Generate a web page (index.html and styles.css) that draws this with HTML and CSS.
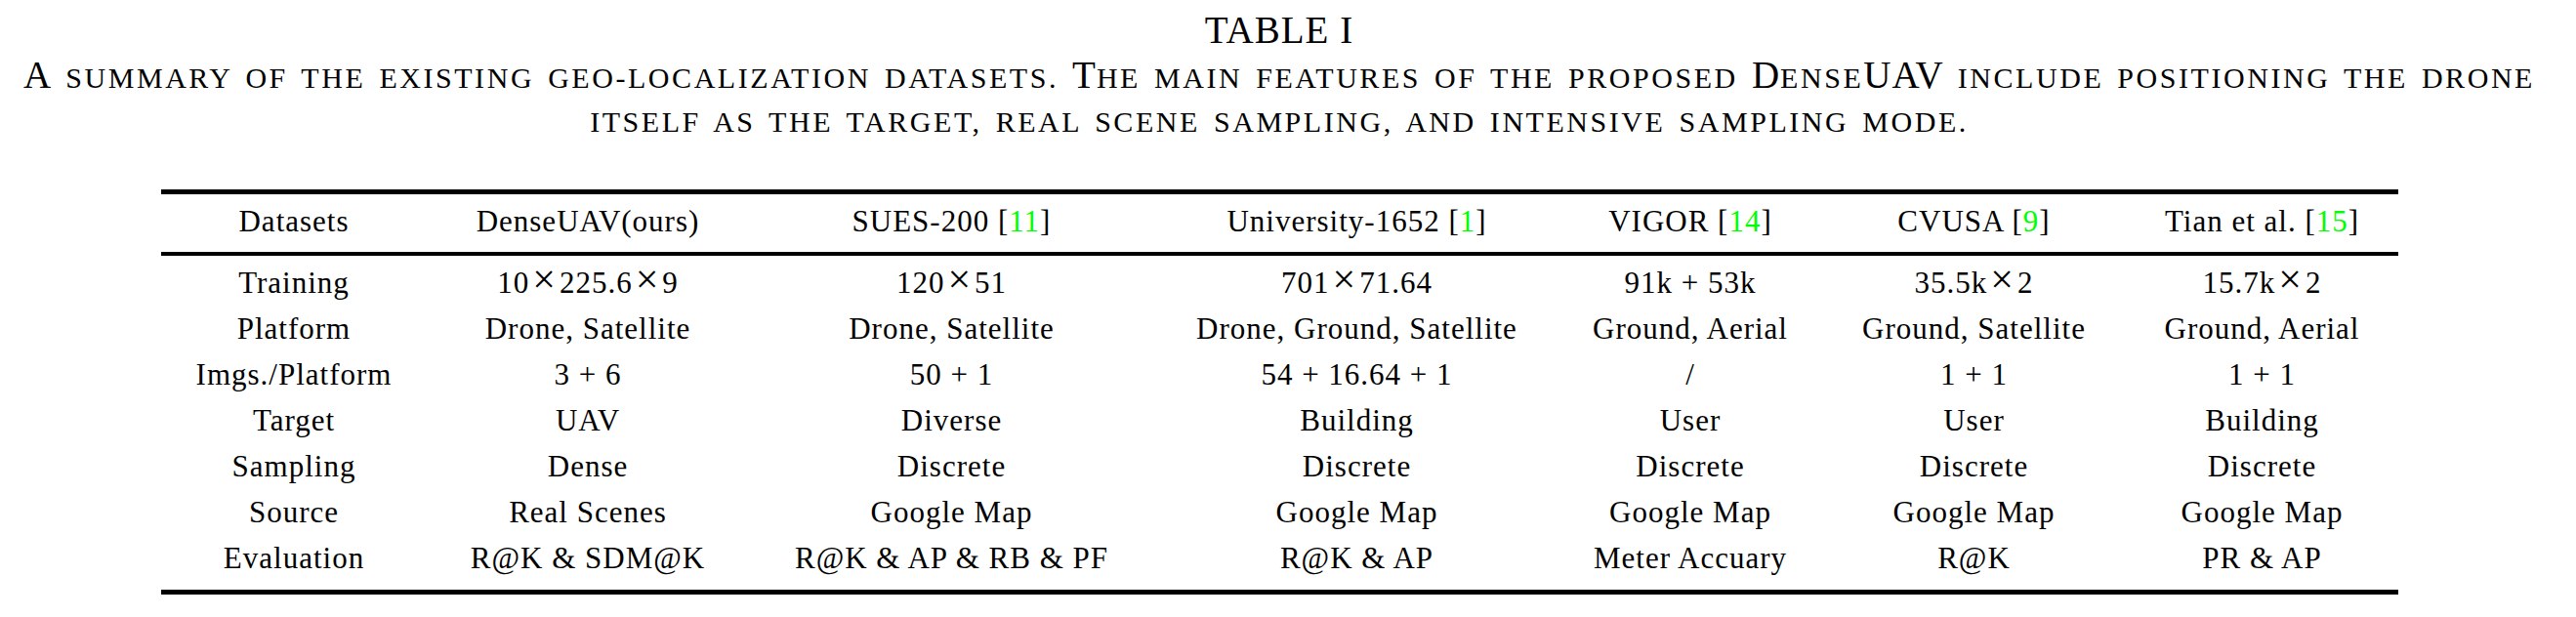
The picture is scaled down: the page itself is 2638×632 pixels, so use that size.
FILE: index.html
```html
<!DOCTYPE html>
<html>
<head>
<meta charset="utf-8">
<link rel="stylesheet" href="styles.css">
</head>
<body>
<div class="page">
  <div class="title">TABLE I</div>
  <div class="caption">A<span class="sc"> summary of the existing geo-localization datasets. </span>T<span class="sc">he main features of the proposed </span>D<span class="sc">ense</span>UAV<span class="sc"> include positioning the drone</span><br><span class="sc">itself as the target, real scene sampling, and intensive sampling mode.</span></div>
  <table class="summary">
    <colgroup>
      <col class="c1"><col class="c2"><col class="c3"><col class="c4"><col class="c5"><col class="c6"><col class="c7">
    </colgroup>
    <thead>
      <tr>
        <th>Datasets</th>
        <th>DenseUAV(ours)</th>
        <th>SUES-200 [<span class="cite">11</span>]</th>
        <th>University-1652 [<span class="cite">1</span>]</th>
        <th>VIGOR [<span class="cite">14</span>]</th>
        <th>CVUSA [<span class="cite">9</span>]</th>
        <th>Tian et al. [<span class="cite">15</span>]</th>
      </tr>
    </thead>
    <tbody>
      <tr class="first">
        <td>Training</td>
        <td>10<span class="x">×</span>225.6<span class="x">×</span>9</td>
        <td>120<span class="x">×</span>51</td>
        <td>701<span class="x">×</span>71.64</td>
        <td>91k + 53k</td>
        <td>35.5k<span class="x">×</span>2</td>
        <td>15.7k<span class="x">×</span>2</td>
      </tr>
      <tr>
        <td>Platform</td>
        <td>Drone, Satellite</td>
        <td>Drone, Satellite</td>
        <td>Drone, Ground, Satellite</td>
        <td>Ground, Aerial</td>
        <td>Ground, Satellite</td>
        <td>Ground, Aerial</td>
      </tr>
      <tr>
        <td>Imgs./Platform</td>
        <td>3 + 6</td>
        <td>50 + 1</td>
        <td>54 + 16.64 + 1</td>
        <td>/</td>
        <td>1 + 1</td>
        <td>1 + 1</td>
      </tr>
      <tr>
        <td>Target</td>
        <td>UAV</td>
        <td>Diverse</td>
        <td>Building</td>
        <td>User</td>
        <td>User</td>
        <td>Building</td>
      </tr>
      <tr>
        <td>Sampling</td>
        <td>Dense</td>
        <td>Discrete</td>
        <td>Discrete</td>
        <td>Discrete</td>
        <td>Discrete</td>
        <td>Discrete</td>
      </tr>
      <tr>
        <td>Source</td>
        <td>Real Scenes</td>
        <td>Google Map</td>
        <td>Google Map</td>
        <td>Google Map</td>
        <td>Google Map</td>
        <td>Google Map</td>
      </tr>
      <tr class="last">
        <td>Evaluation</td>
        <td>R@K &amp; SDM@K</td>
        <td>R@K &amp; AP &amp; RB &amp; PF</td>
        <td>R@K &amp; AP</td>
        <td>Meter Accuary</td>
        <td>R@K</td>
        <td>PR &amp; AP</td>
      </tr>
    </tbody>
  </table>
</div>
</body>
</html>
```

FILE: styles.css
```css
html, body {
  margin: 0;
  padding: 0;
  background: #ffffff;
}
body {
  padding-top: 8px;
  font-family: "Liberation Serif", "Times New Roman", serif;
  color: #000000;
}
.page {
  width: 2620px;
}
.title, .caption {
  text-align: center;
  font-size: 39px;
  line-height: 45.5px;
  letter-spacing: 1px;
  white-space: nowrap;
}
.sc {
  text-transform: uppercase;
  font-size: 30px;
  line-height: 1;
  letter-spacing: 2.55px;
  word-spacing: 4px;
}
.summary {
  margin: 49px auto 0;
  width: 2291px;
  border-collapse: collapse;
  table-layout: fixed;
  font-size: 31px;
  line-height: 46.9px;
  letter-spacing: 1px;
}
.c1 { width: 273px; }
.c2 { width: 329px; }
.c3 { width: 416px; }
.c4 { width: 414px; }
.c5 { width: 269px; }
.c6 { width: 312px; }
.c7 { width: 278px; }
.summary th, .summary td {
  padding: 0;
  text-align: center;
  white-space: nowrap;
  font-weight: normal;
}
.summary thead th {
  border-top: 5px solid #000;
  border-bottom: 4px solid #000;
  padding-top: 5px;
  padding-bottom: 8px;
}
.summary tr.first td {
  padding-top: 5px;
}
.summary tr.last td {
  padding-bottom: 8px;
  border-bottom: 5px solid #000;
}
.cite {
  color: #00ff00;
}
.x {
  font-size: 42px;
  line-height: 0;
  margin: 0 3px;
}
```
